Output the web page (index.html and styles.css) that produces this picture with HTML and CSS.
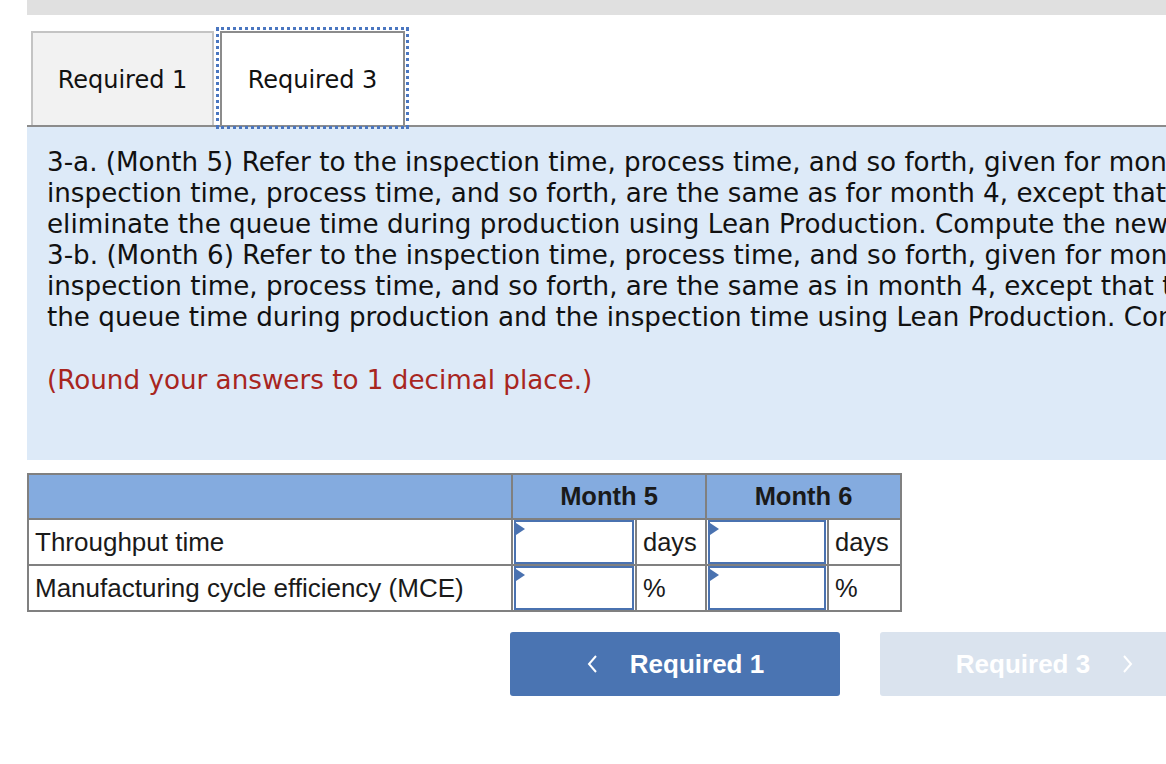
FILE: index.html
```html
<!DOCTYPE html>
<html>
<head>
<meta charset="utf-8">
<link rel="stylesheet" href="styles.css">
</head>
<body>
<div class="page">
  <div class="topbar"></div>
  <div class="tabs">
    <div class="tab tab-inactive">Required 1</div>
    <div class="tab tab-active">Required 3</div>
  </div>
  <div class="panel">
    <p class="question">
      <span class="line">3-a. (Month 5) Refer to the inspection time, process time, and so forth, given for month 4. Assume that the</span>
      <span class="line">inspection time, process time, and so forth, are the same as for month 4, except that the company is able to</span>
      <span class="line">eliminate the queue time during production using Lean Production. Compute the new throughput time and MCE.</span>
      <span class="line">3-b. (Month 6) Refer to the inspection time, process time, and so forth, given for month 4. Assume that the</span>
      <span class="line">inspection time, process time, and so forth, are the same as in month 4, except that the company is able to eliminate both</span>
      <span class="line">the queue time during production and the inspection time using Lean Production. Compute the new throughput time and MCE.</span>
    </p>
    <p class="note">(Round your answers to 1 decimal place.)</p>
  </div>
  <table class="grid">
    <tr class="head">
      <th class="label-col"></th>
      <th colspan="2">Month 5</th>
      <th colspan="2">Month 6</th>
    </tr>
    <tr>
      <td class="label">Throughput time</td>
      <td class="input-cell"><div class="input"><span class="flag"></span></div></td>
      <td class="unit">days</td>
      <td class="input-cell narrow"><div class="input"><span class="flag"></span></div></td>
      <td class="unit wide">days</td>
    </tr>
    <tr>
      <td class="label">Manufacturing cycle efficiency (MCE)</td>
      <td class="input-cell"><div class="input"><span class="flag"></span></div></td>
      <td class="unit">%</td>
      <td class="input-cell narrow"><div class="input"><span class="flag"></span></div></td>
      <td class="unit wide">%</td>
    </tr>
  </table>
  <div class="nav">
    <div class="btn btn-prev"><span class="chev">
      <svg width="12" height="18" viewBox="0 0 12 18"><path d="M10 1 L3 9 L10 17" fill="none" stroke="#fff" stroke-width="2"/></svg>
    </span><span>Required 1</span></div>
    <div class="btn btn-next"><span>Required 3</span><span class="chev">
      <svg width="12" height="18" viewBox="0 0 12 18"><path d="M2 1 L9 9 L2 17" fill="none" stroke="#fff" stroke-width="2"/></svg>
    </span></div>
  </div>
</div>
</body>
</html>
```
FILE: styles.css
```css
html, body {
  margin: 0;
  padding: 0;
  background: #ffffff;
  overflow: hidden;
}
.page {
  width: 1400px;
  padding-left: 27px;
  font-family: "DejaVu Sans", Verdana, sans-serif;
  color: #111;
}
.topbar {
  height: 15px;
  background: #e0e0e0;
}
.tabs {
  display: flex;
  align-items: flex-end;
  margin-top: 16px;
  padding-left: 4px;
  height: 94px;
}
.tab {
  box-sizing: border-box;
  height: 94px;
  padding-top: 2px;
  display: flex;
  align-items: center;
  justify-content: center;
  font-size: 24px;
  color: #111;
}
.tab-inactive {
  width: 183px;
  background: #f2f2f2;
  border: 2px solid #c4c4c4;
  border-bottom: none;
}
.tab-active {
  width: 185px;
  margin-left: 6px;
  background: #fff;
  border: 2px solid #8c8c8c;
  border-bottom: none;
  outline: 3px dotted #4a76c0;
  outline-offset: 1px;
  position: relative;
  z-index: 1;
}
.panel {
  box-sizing: border-box;
  height: 335px;
  background: #ddeaf8;
  border-top: 2px solid #8c8c8c;
  padding: 20px 0 0 20px;
}
.question {
  margin: 0;
  font-size: 26.2px;
  line-height: 31px;
}
.line {
  display: block;
  white-space: nowrap;
}
.note {
  margin: 32px 0 0 0;
  font-size: 26.2px;
  line-height: 31px;
  color: #a8261f;
}
.grid {
  margin-top: 13px;
  border-collapse: collapse;
  font-family: "Liberation Sans", Arial, sans-serif;
  font-size: 25.5px;
  color: #1a1a1a;
}
.grid th, .grid td {
  border: 2px solid #808080;
  padding: 0;
}
.head th {
  background: #84abdf;
  height: 43px;
  font-weight: bold;
  text-align: center;
}
.label-col { width: 482px; }
.grid td { height: 44px; }
.label {
  padding-left: 6px !important;
  width: 476px;
  background: #fff;
  font-size: 26px;
}
.input-cell {
  width: 122px;
  background: #fff;
}
.input-cell.narrow { width: 120px; }
.input {
  position: relative;
  box-sizing: border-box;
  height: 44px;
  margin: 0 1px;
  border: 2px solid #4a72b0;
  background: #fff;
}
.flag {
  position: absolute;
  left: 0;
  top: 1px;
  width: 0;
  height: 0;
  border-top: 6px solid transparent;
  border-bottom: 6px solid transparent;
  border-left: 9px solid #4a72b0;
}
.unit {
  width: 62px;
  padding-left: 6px !important;
  background: #fff;
}
.unit.wide { width: 65px; }
.nav {
  display: flex;
  gap: 40px;
  margin-top: 20px;
  margin-left: 483px;
}
.btn {
  box-sizing: border-box;
  width: 330px;
  height: 64px;
  border-radius: 3px;
  display: flex;
  align-items: center;
  justify-content: center;
  gap: 32px;
  font-family: "Liberation Sans", Arial, sans-serif;
  font-weight: bold;
  font-size: 26px;
  color: #fff;
}
.btn-prev { background: #4a74b2; }
.btn-next { background: #dae3ee; }
.chev { display: flex; align-items: center; }
```
